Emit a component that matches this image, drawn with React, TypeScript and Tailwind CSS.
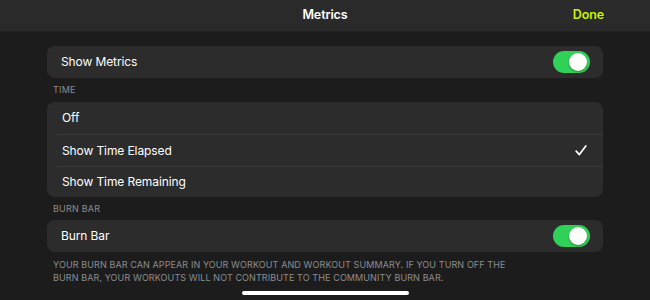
import React from "react"

const font = { fontFamily: "Inter, 'Liberation Sans', sans-serif" }

function Toggle() {
  return (
    <div className="w-[37px] h-[22px] rounded-full bg-[#30d158] flex items-center justify-end pr-[3px]">
      <div className="w-[18px] h-[18px] rounded-full bg-white shadow-[0_1px_2px_rgba(0,0,0,0.35)]" />
    </div>
  )
}

function Check() {
  return (
    <svg width="12" height="11" viewBox="0 0 12 11" fill="none">
      <path d="M1.2 6.2 L4.4 9.6 L10.8 1" stroke="white" strokeWidth="1.7" strokeLinecap="round" strokeLinejoin="round" />
    </svg>
  )
}

function SectionLabel({ children, h }: { children: React.ReactNode; h: string }) {
  return (
    <div className={`${h} flex items-center pl-[6px] text-[9px] tracking-[0.2px] text-[#8c8c90]`}>
      {children}
    </div>
  )
}

const timeOptions = ["Off", "Show Time Elapsed", "Show Time Remaining"]

export default function App() {
  return (
    <div className="w-[650px] h-[300px] bg-[#1c1c1c] flex flex-col text-white" style={font}>
      <header className="relative h-[32px] shrink-0 bg-[#2a2a2a] border-b border-[#202020] flex items-center justify-center">
        <span className="text-[12.5px] font-semibold tracking-[-0.1px]">Metrics</span>
        <button className="absolute right-[46px] top-0 h-full flex items-center text-[12.5px] font-semibold tracking-[-0.1px] text-[#c9f400]">
          Done
        </button>
      </header>

      <main className="flex-1 flex flex-col px-[47px] pt-[14px]">
        <div className="h-[32px] rounded-[8px] bg-[#2c2c2c] flex items-center justify-between pl-[14px] pr-[13px]">
          <span className="text-[12px] tracking-[-0.1px]">Show Metrics</span>
          <Toggle />
        </div>

        <SectionLabel h="h-[24px]">TIME</SectionLabel>

        <div className="rounded-[8px] bg-[#2c2c2c] pl-[10px]">
          {timeOptions.map((label, i) => (
            <div
              key={label}
              className={`flex items-center justify-between pl-[5px] pr-[16px] ${i > 0 ? "border-t border-[#3a3a3a]" : ""} ${i === 2 ? "h-[31px]" : "h-[32px]"}`}
            >
              <span className="text-[12px] tracking-[-0.1px]">{label}</span>
              {i === 1 && <Check />}
            </div>
          ))}
        </div>

        <SectionLabel h="h-[23px]">BURN BAR</SectionLabel>

        <div className="h-[32px] rounded-[8px] bg-[#2c2c2c] flex items-center justify-between pl-[14px] pr-[13px]">
          <span className="text-[12px] tracking-[-0.1px]">Burn Bar</span>
          <Toggle />
        </div>

        <p className="mt-[6px] pl-[6px] text-[9px] leading-[13px] tracking-[0.1px] text-[#8c8c90]">
          YOUR BURN BAR CAN APPEAR IN YOUR WORKOUT AND WORKOUT SUMMARY. IF YOU TURN OFF THE
          <br />
          BURN BAR, YOUR WORKOUTS WILL NOT CONTRIBUTE TO THE COMMUNITY BURN BAR.
        </p>

        <div className="mt-auto mb-[5px] self-center w-[167px] h-[4px] rounded-full bg-white" />
      </main>
    </div>
  )
}
